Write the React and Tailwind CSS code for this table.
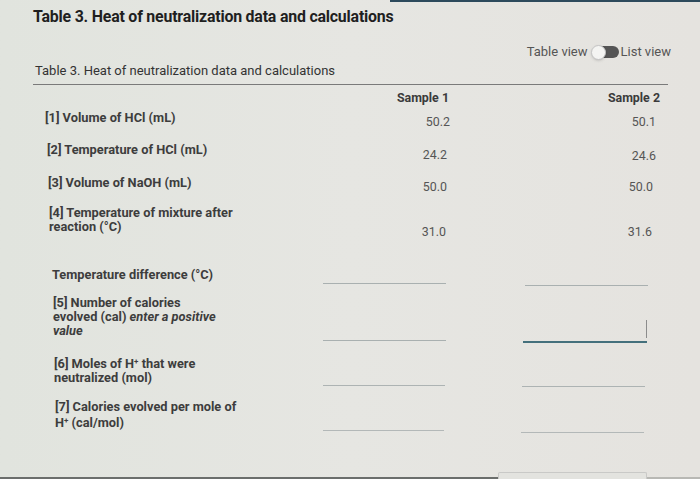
import React from "react";

const font = { fontFamily: "Roboto, 'Liberation Sans', sans-serif" };

function Label({ children, className = "" }) {
  return (
    <div className={`text-[12.8px] font-bold text-[#3d3d3d] leading-[14px] ${className}`}>{children}</div>
  );
}

function Val({ children, className = "" }) {
  return <div className={`text-right text-[12.4px] text-[#555] leading-[14px] ${className}`}>{children}</div>;
}

export default function App() {
  return (
    <div
      className="w-[700px] h-[479px] overflow-hidden flex flex-col bg-gradient-to-r from-[#e1e4de] via-[#e6e6e2] to-[#e5e3df]"
      style={font}
    >
      {/* top dark strip */}
      <div className="flex h-[2px]">
        <div className="w-[390px]" />
        <div className="flex-1 bg-[#2d4a5c]" />
      </div>

      {/* main title */}
      <div className="mt-[5px] pl-[33px] h-[20px] leading-[20px] text-[15.9px] font-bold text-[#1f1f1f] tracking-[-0.2px]">
        Table 3. Heat of neutralization data and calculations
      </div>

      {/* toggle */}
      <div className="mt-[15px] h-[20px] flex items-center justify-end pr-[29px] text-[13px] text-[#555]">
        <span>Table view</span>
        <span className="relative ml-[3px] mr-[2px] w-[28px] h-[16px] flex items-center">
          <span className="absolute right-0 w-[18px] h-[12px] rounded-r-full bg-[#555]" />
          <span className="absolute left-0 w-[15px] h-[15px] rounded-full bg-[#f4f4f2] border border-[#c4c4c4] shadow-sm" />
        </span>
        <span>List view</span>
      </div>

      {/* subtitle */}
      <div className="mt-[1px] pl-[35px] h-[16px] leading-[16px] text-[13px] text-[#333]">
        Table 3. Heat of neutralization data and calculations
      </div>

      {/* separator */}
      <div className="mt-[5px] ml-[33px] w-[635px] h-px bg-[#7a7a7a]" />

      {/* table */}
      <div className="pl-[45px] mt-[4px]">
        {/* header */}
        <div className="grid grid-cols-[278px_127px_210px] h-[16px] items-center text-[12.4px] font-bold text-[#3b3b3b]">
          <div />
          <div className="text-right pr-px">Sample 1</div>
          <div className="text-right">Sample 2</div>
        </div>

        {/* r1 */}
        <div className="grid grid-cols-[278px_127px_210px] h-[34px]">
          <Label className="pt-[6px]">[1] Volume of HCl (mL)</Label>
          <Val className="pt-[10px]">50.2</Val>
          <Val className="pt-[10px] pr-[4px]">50.1</Val>
        </div>

        {/* r2 */}
        <div className="grid grid-cols-[278px_127px_210px] h-[33px]">
          <Label className="pt-[4px] pl-[2px]">[2] Temperature of HCl (mL)</Label>
          <Val className="pt-[9px] pr-[3px]">24.2</Val>
          <Val className="pt-[10px] pr-[4px]">24.6</Val>
        </div>

        {/* r3 */}
        <div className="grid grid-cols-[278px_127px_210px] h-[29px]">
          <Label className="pt-[4px] pl-[3px]">[3] Volume of NaOH (mL)</Label>
          <Val className="pt-[8px] pr-[3px]">50.0</Val>
          <Val className="pt-[8px] pr-[7px]">50.0</Val>
        </div>

        {/* r4 */}
        <div className="grid grid-cols-[278px_127px_210px] h-[59px]">
          <Label className="pt-[5px] pl-[4px]">
            [4] Temperature of mixture after
            <br />
            reaction (°C)
          </Label>
          <Val className="pt-[24px] pr-[4px]">31.0</Val>
          <Val className="pt-[24px] pr-[8px]">31.6</Val>
        </div>

        {/* temperature difference */}
        <div className="grid grid-cols-[278px_127px_210px] h-[32px]">
          <Label className="pt-[8px] pl-[7px]">Temperature difference (°C)</Label>
          <div>
            <div className="mt-[23px] w-[123px] h-px bg-[#a9b0b0]" />
          </div>
          <div>
            <div className="mt-[25px] ml-[75px] w-[123px] h-px bg-[#a9b0b0]" />
          </div>
        </div>

        {/* r5 */}
        <div className="grid grid-cols-[278px_127px_210px] h-[60px]">
          <Label className="pt-[4px] pl-[8px] leading-[14.5px]">
            [5] Number of calories
            <br />
            evolved (cal) <em className="italic">enter a positive</em>
            <br />
            <em className="italic">value</em>
          </Label>
          <div>
            <div className="mt-[48px] w-[123px] h-px bg-[#a9b0b0]" />
          </div>
          <div className="relative">
            <div className="absolute left-[196px] top-[28px] w-px h-[18px] bg-[#8c8c8c]" />
            <div className="mt-[49px] ml-[73px] w-[124px] h-[2px] bg-[#44707c]" />
          </div>
        </div>

        {/* r6 */}
        <div className="grid grid-cols-[278px_127px_210px] h-[44px]">
          <Label className="pt-[5px] pl-[9px]">
            [6] Moles of H<sup className="text-[8px]">+</sup> that were
            <br />
            neutralized (mol)
          </Label>
          <div>
            <div className="mt-[33px] w-[122px] h-px bg-[#adb3b3]" />
          </div>
          <div>
            <div className="mt-[34px] ml-[72px] w-[123px] h-px bg-[#adb3b3]" />
          </div>
        </div>

        {/* r7 */}
        <div className="grid grid-cols-[278px_127px_210px] h-[49px]">
          <Label className="pt-[3px] pl-[10px] leading-[15.5px]">
            [7] Calories evolved per mole of
            <br />
            H<sup className="text-[8px]">+</sup> (cal/mol)
          </Label>
          <div>
            <div className="mt-[34px] w-[121px] h-px bg-[#b3b8b8]" />
          </div>
          <div>
            <div className="mt-[36px] ml-[71px] w-[123px] h-px bg-[#b3b8b8]" />
          </div>
        </div>
      </div>

      {/* bottom */}
      <div className="mt-auto flex items-end">
        <div className="w-[498px] h-[2px] bg-[#6b6e6c]" />
        <div className="w-[149px] h-[7px] border border-b-0 border-[#c9c9c7] rounded-t-[2px] bg-[#e3e3df]" />
        <div className="flex-1 h-[2px] bg-[#b8b8b4]" />
      </div>
    </div>
  );
}
